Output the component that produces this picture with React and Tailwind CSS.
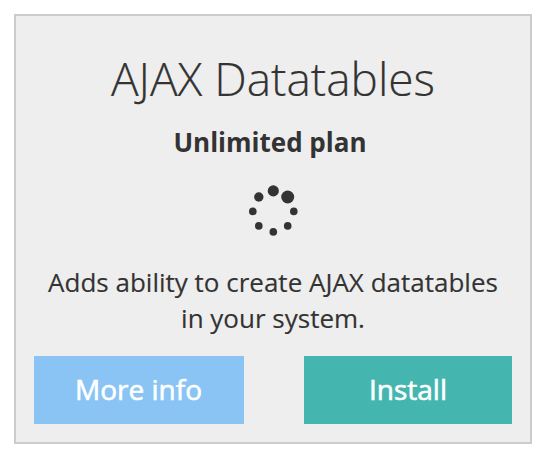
const dots = [
  { cx: 273.3, cy: 190.9, r: 5.6 },
  { cx: 287.7, cy: 197, r: 6.5 },
  { cx: 293.8, cy: 211.4, r: 3.8 },
  { cx: 287.7, cy: 225.9, r: 3.8 },
  { cx: 273.3, cy: 231.9, r: 3.8 },
  { cx: 258.8, cy: 225.9, r: 3.8 },
  { cx: 252.8, cy: 211.4, r: 3.8 },
  { cx: 258.8, cy: 197, r: 4.7 },
];

function Spinner() {
  return (
    <svg viewBox="248 184 50 52" className="h-[52px] w-[50px]" fill="#333333">
      {dots.map((dot, i) => (
        <circle key={i} {...dot} />
      ))}
    </svg>
  );
}

export default function App() {
  return (
    <div className="h-[460px] w-[550px] bg-white pl-[14px] pt-[14px] font-['Open_Sans',sans-serif] text-[#333333]">
      <div className="flex h-[430px] w-[518px] flex-col items-center border-2 border-[#cccccc] bg-[#eeeeee] px-[18px] pb-[18px] text-center">
        <h2 className="mt-[29px] whitespace-nowrap text-[46px] font-light leading-[66px] [-webkit-text-stroke:0.2px_#333333]">
          AJAX Datatables
        </h2>
        <p className="mt-[13px] pr-[6px] text-[26px] font-bold leading-[36px]">Unlimited plan</p>
        <div className="mt-[24px]">
          <Spinner />
        </div>
        <p className="mt-[28px] whitespace-nowrap text-[26px] leading-[36px] [-webkit-text-stroke:0.15px_#333333]">
          Adds ability to create AJAX datatables
          <br />
          in your system.
        </p>
        <div className="mt-auto flex w-full justify-between text-[28px] text-white [-webkit-text-stroke:0.6px_#ffffff]">
          <button className="h-[68px] w-[210px] bg-[#89c4f4] pb-[2px] pr-[1px]">More info</button>
          <button className="h-[68px] w-[208px] bg-[#45b6af] pb-[2px]">Install</button>
        </div>
      </div>
    </div>
  );
}
